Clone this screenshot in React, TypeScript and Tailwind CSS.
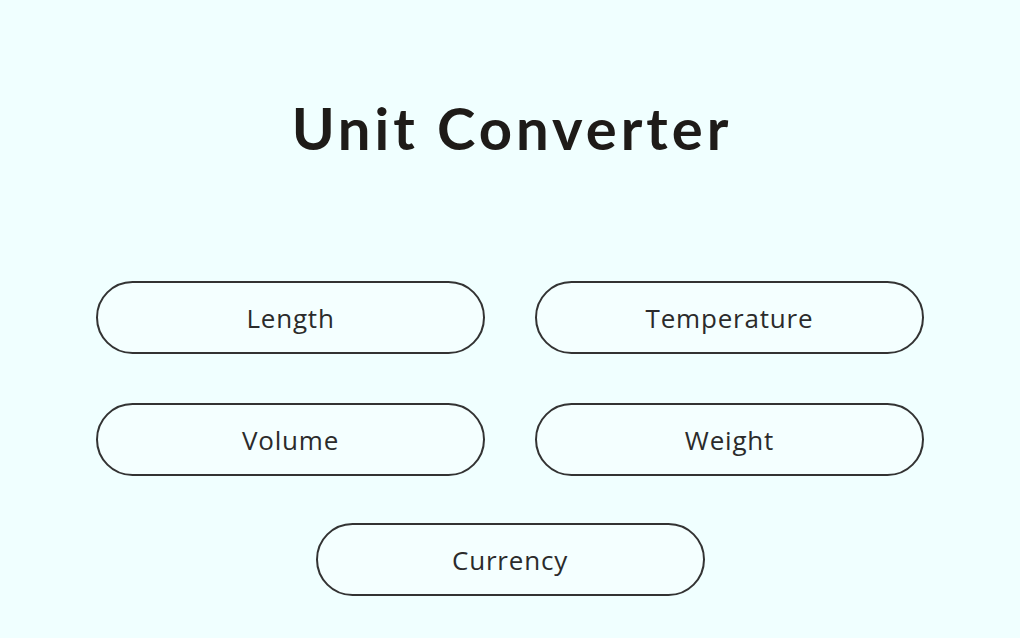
import React from 'react';

const units = ['Length', 'Temperature', 'Volume', 'Weight'];

const UnitButton: React.FC<{ label: string }> = ({ label }) => (
  <button
    type="button"
    className="h-[73px] w-[389px] rounded-full border-2 border-[#333333] bg-[#f4ffff] pt-[2px] text-[26px] tracking-[0.8px] text-[#2b2b2b] font-['Open_Sans',sans-serif]"
  >
    {label}
  </button>
);

export default function App() {
  return (
    <div className="min-h-[638px] w-full bg-[#f0ffff] flex flex-col items-center">
      <h1 className="mt-[92px] pl-[4px] text-[58px] leading-[72px] font-bold text-[#1e1b18] font-['Lato',sans-serif] tracking-[4px]">
        Unit Converter
      </h1>

      <div className="mt-[117px] grid grid-cols-2 gap-x-[50px] gap-y-[49px]">
        {units.map((u) => (
          <UnitButton key={u} label={u} />
        ))}
      </div>

      <div className="mt-[47px]">
        <UnitButton label="Currency" />
      </div>
    </div>
  );
}
